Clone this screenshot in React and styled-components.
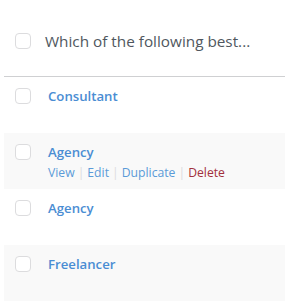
import React from "react";
import styled, { createGlobalStyle } from "styled-components";

const GlobalStyle = createGlobalStyle`
  html, body {
    margin: 0;
    padding: 0;
    background: #fff;
  }
  body {
    font-family: "Open Sans", "Noto Sans", sans-serif;
    -webkit-font-smoothing: antialiased;
  }
`;

const rows = [
  { id: 1, title: "Consultant", alt: false },
  { id: 2, title: "Agency", alt: true, hover: true },
  { id: 3, title: "Agency", alt: false },
  { id: 4, title: "Freelancer", alt: true },
];

const App = () => {
  return (
    <>
      <GlobalStyle />
      <Container>
        <Header>
          <Check />
          <Question>Which of the following best...</Question>
        </Header>
        {rows.map((row) => (
          <Row key={row.id} $alt={row.alt}>
            <Check />
            <Cell>
              <Title href="#">{row.title}</Title>
              <Actions $show={row.hover}>
                <Action href="#">View</Action>
                <Sep>|</Sep>
                <Action href="#">Edit</Action>
                <Sep>|</Sep>
                <Action href="#">Duplicate</Action>
                <Sep>|</Sep>
                <Action href="#" $danger>
                  Delete
                </Action>
              </Actions>
            </Cell>
          </Row>
        ))}
      </Container>
    </>
  );
};

const Container = styled.div`
  padding-left: 4px;
  width: 100%;
  box-sizing: border-box;
  overflow: hidden;
`;

const Header = styled.div`
  display: flex;
  align-items: flex-start;
  gap: 14px;
  height: 77px;
  padding: 33px 0 0 11px;
  box-sizing: border-box;
  border-bottom: 1px solid #cfd0d2;
`;

const Check = styled.span`
  flex: none;
  width: 14px;
  height: 14px;
  border: 1px solid #dcdcde;
  border-radius: 4px;
  background: #fff;
`;

const Question = styled.span`
  font-size: 15.3px;
  line-height: 16px;
  color: #50575e;
  white-space: nowrap;
`;

const Row = styled.div`
  display: flex;
  align-items: flex-start;
  gap: 17px;
  height: 56px;
  padding: 11px 0 0 11px;
  box-sizing: border-box;
  background: ${(p) => (p.$alt ? "#f9f9f9" : "#fff")};
`;

const Cell = styled.div`
  display: flex;
  flex-direction: column;
  gap: 5px;
`;

const Title = styled.a`
  font-size: 13.2px;
  line-height: 16px;
  font-weight: 600;
  color: #4a8dd3;
  text-decoration: none;
`;

const Actions = styled.div`
  display: flex;
  align-items: center;
  gap: 3px;
  font-size: 12.2px;
  line-height: 16px;
  visibility: ${(p) => (p.$show ? "visible" : "hidden")};
`;

const Action = styled.a`
  color: ${(p) => (p.$danger ? "#a2303c" : "#5b9bd8")};
  text-decoration: none;
`;

const Sep = styled.span`
  color: #dcdcde;
`;

export default App;
